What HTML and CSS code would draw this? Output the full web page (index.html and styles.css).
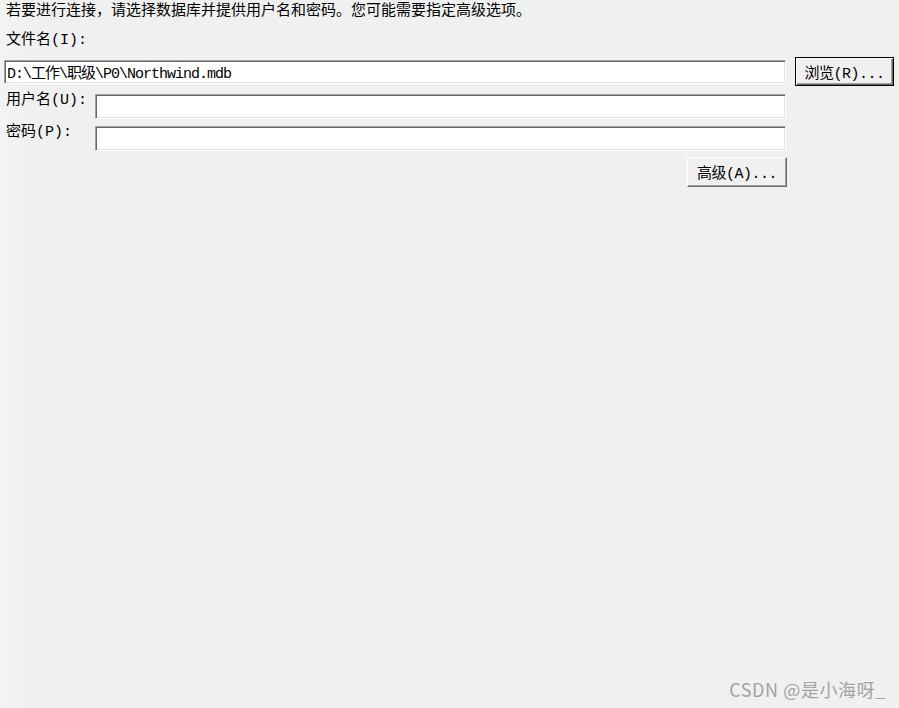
FILE: index.html
```html
<!DOCTYPE html>
<html>
<head>
    <title>连接</title>
    <link rel="stylesheet" href="styles.css">
</head>
<body>
    <div class="page">
        <p class="intro">若要进行连接，请选择数据库并提供用户名和密码。您可能需要指定高级选项。</p>
        <label class="file-label" for="fileName">文件名(I):</label>
        <div class="file-row">
            <input type="text" id="fileName" class="field" value="D:\工作\职级\P0\Northwind.mdb">
            <button type="button" class="btn btn-default">浏览(R)...</button>
        </div>
        <div class="login-grid">
            <label for="userName">用户名(U):</label>
            <input type="text" id="userName" class="field">
            <label for="password">密码(P):</label>
            <input type="password" id="password" class="field">
        </div>
        <div class="actions">
            <button type="button" class="btn">高级(A)...</button>
        </div>
    </div>
    <div class="watermark">CSDN @是小海呀_</div>
</body>
</html>
```

FILE: styles.css
```css
html, body {
    height: 100%;
}
body {
    margin: 0;
    background-color: #f0f0f0;
    background-image: linear-gradient(to right, #f3f3f3 0, #f1f1f1 24px, #f0f0f0 26px);
    font-family: "Liberation Mono", "Noto Sans CJK SC", monospace;
    font-size: 15px;
    color: #000;
    position: relative;
    overflow: hidden;
}
.page {
    width: 894px;
    padding: 2px 0 0 4px;
    box-sizing: border-box;
}
.intro {
    margin: 0 0 0 2px;
    line-height: 20px;
}
.file-label {
    display: block;
    margin: 9px 0 0 2px;
    line-height: 20px;
}
.file-row {
    display: flex;
    align-items: center;
    gap: 9px;
    margin-top: 6px;
}
.file-row .field {
    flex: 1;
}
.field {
    height: 24px;
    box-sizing: border-box;
    margin: 0;
    padding: 0 2px;
    font: inherit;
    letter-spacing: -1px;
    background: #fff;
    border: 1px solid;
    border-color: #a0a0a0 #fff #fff #a0a0a0;
    box-shadow: inset 1px 1px 0 #696969, inset -1px -1px 0 #e3e3e3;
    outline: none;
}
.login-grid {
    display: grid;
    grid-template-columns: 89px 691px;
    column-gap: 2px;
    row-gap: 7px;
    align-items: start;
    margin-top: 8px;
}
.login-grid .field {
    height: 25px;
}
.login-grid label {
    padding-left: 2px;
    line-height: 18px;
    margin-top: -2px;
}
.actions {
    width: 783px;
    display: flex;
    justify-content: flex-end;
    margin-top: 6px;
}
.btn {
    width: 100px;
    height: 30px;
    box-sizing: border-box;
    padding: 0;
    font: inherit;
    letter-spacing: -0.5px;
    color: #000;
    background: #f0f0f0;
    border: 1px solid;
    border-color: #fff #696969 #696969 #fff;
    box-shadow: inset -1px -1px 0 #a0a0a0;
}
.btn-default {
    width: 99px;
    height: 29px;
    border-color: #000;
    box-shadow: inset 1px 1px 0 #fff, inset -1px -1px 0 #696969, inset -2px -2px 0 #a0a0a0;
}
.watermark {
    position: absolute;
    right: 13px;
    bottom: 6px;
    font-family: "Noto Sans CJK SC", sans-serif;
    font-size: 18px;
    letter-spacing: 0.6px;
    color: #a3a3a3;
}
```
